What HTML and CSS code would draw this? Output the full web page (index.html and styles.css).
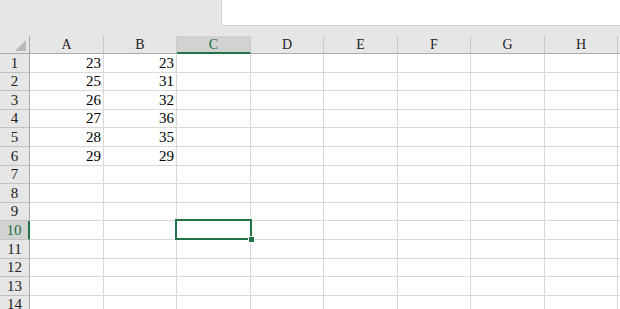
FILE: index.html
```html
<!DOCTYPE html>
<html>
<head>
<meta charset="utf-8">
<link rel="stylesheet" href="styles.css">
</head>
<body>
<div class="app">
  <div class="topbar">
    <div class="topbar-left"></div>
    <div class="formula-box"></div>
  </div>
  <div class="sheet">
    <div class="grid">
      <div class="corner"><span class="tri"></span></div>
      <div class="ch">A</div><div class="ch">B</div><div class="ch sel">C</div><div class="ch">D</div><div class="ch">E</div><div class="ch">F</div><div class="ch">G</div><div class="ch">H</div><div class="ch last"></div>

      <div class="rh">1</div><div class="c n">23</div><div class="c n">23</div><div class="c"></div><div class="c"></div><div class="c"></div><div class="c"></div><div class="c"></div><div class="c"></div><div class="c"></div>
      <div class="rh">2</div><div class="c n">25</div><div class="c n">31</div><div class="c"></div><div class="c"></div><div class="c"></div><div class="c"></div><div class="c"></div><div class="c"></div><div class="c"></div>
      <div class="rh">3</div><div class="c n">26</div><div class="c n">32</div><div class="c"></div><div class="c"></div><div class="c"></div><div class="c"></div><div class="c"></div><div class="c"></div><div class="c"></div>
      <div class="rh">4</div><div class="c n">27</div><div class="c n">36</div><div class="c"></div><div class="c"></div><div class="c"></div><div class="c"></div><div class="c"></div><div class="c"></div><div class="c"></div>
      <div class="rh">5</div><div class="c n">28</div><div class="c n">35</div><div class="c"></div><div class="c"></div><div class="c"></div><div class="c"></div><div class="c"></div><div class="c"></div><div class="c"></div>
      <div class="rh">6</div><div class="c n">29</div><div class="c n">29</div><div class="c"></div><div class="c"></div><div class="c"></div><div class="c"></div><div class="c"></div><div class="c"></div><div class="c"></div>
      <div class="rh">7</div><div class="c"></div><div class="c"></div><div class="c"></div><div class="c"></div><div class="c"></div><div class="c"></div><div class="c"></div><div class="c"></div><div class="c"></div>
      <div class="rh">8</div><div class="c"></div><div class="c"></div><div class="c"></div><div class="c"></div><div class="c"></div><div class="c"></div><div class="c"></div><div class="c"></div><div class="c"></div>
      <div class="rh">9</div><div class="c"></div><div class="c"></div><div class="c"></div><div class="c"></div><div class="c"></div><div class="c"></div><div class="c"></div><div class="c"></div><div class="c"></div>
      <div class="rh sel">10</div><div class="c"></div><div class="c"></div><div class="c"></div><div class="c"></div><div class="c"></div><div class="c"></div><div class="c"></div><div class="c"></div><div class="c"></div>
      <div class="rh">11</div><div class="c"></div><div class="c"></div><div class="c"></div><div class="c"></div><div class="c"></div><div class="c"></div><div class="c"></div><div class="c"></div><div class="c"></div>
      <div class="rh">12</div><div class="c"></div><div class="c"></div><div class="c"></div><div class="c"></div><div class="c"></div><div class="c"></div><div class="c"></div><div class="c"></div><div class="c"></div>
      <div class="rh">13</div><div class="c"></div><div class="c"></div><div class="c"></div><div class="c"></div><div class="c"></div><div class="c"></div><div class="c"></div><div class="c"></div><div class="c"></div>
      <div class="rh">14</div><div class="c"></div><div class="c"></div><div class="c"></div><div class="c"></div><div class="c"></div><div class="c"></div><div class="c"></div><div class="c"></div><div class="c"></div>
    </div>
    <div class="selection"><span class="handle"></span></div>
  </div>
</div>
</body>
</html>
```

FILE: styles.css
```css
html, body {
  margin: 0;
  padding: 0;
  background: #ffffff;
  overflow: hidden;
}
.app {
  width: 620px;
  height: 309px;
  overflow: hidden;
  font-family: "Liberation Serif", "Noto Sans CJK SC", serif;
  color: #000;
}
.topbar {
  height: 36px;
  background: #e6e6e6;
  display: flex;
  align-items: flex-start;
}
.topbar-left {
  width: 221px;
}
.formula-box {
  flex: 1;
  height: 25px;
  background: #ffffff;
  border-left: 1px solid #d2d2d2;
  border-bottom: 1px solid #d2d2d2;
}
.sheet {
  position: relative;
}
.grid {
  display: grid;
  grid-template-columns: 30px 74px 73px 74px 73px 74px 73px 74px 73px 40px;
  grid-template-rows: 18px repeat(14, 18.6px);
}
.corner {
  background: #e6e6e6;
  border-right: 1px solid #ababab;
  border-bottom: 1px solid #ababab;
  position: relative;
}
.tri {
  position: absolute;
  right: 3px;
  bottom: 2px;
  width: 0;
  height: 0;
  border-left: 11px solid transparent;
  border-bottom: 11px solid #b9b9b9;
}
.ch {
  background: #e6e6e6;
  border-bottom: 1px solid #ababab;
  border-right: 1px solid #c9c9c9;
  display: flex;
  align-items: flex-end;
  justify-content: center;
  font-size: 14px;
  line-height: 14px;
  padding-bottom: 1px;
  color: #222;
}
.ch.sel {
  background: #d2d2d2;
  color: #217346;
  border-bottom: 2px solid #217346;
  padding-bottom: 0;
}
.rh {
  background: #e6e6e6;
  border-right: 1px solid #ababab;
  border-bottom: 1px solid #c2c2c2;
  display: flex;
  align-items: flex-end;
  justify-content: center;
  font-size: 15px;
  line-height: 15px;
  padding-bottom: 1px;
  color: #222;
}
.rh.sel {
  background: #d2d2d2;
  color: #217346;
  border-right: 2px solid #217346;
}
.c {
  border-right: 1px solid #d9d9d9;
  border-bottom: 1px solid #d9d9d9;
  background: #fff;
}
.c.n {
  display: flex;
  align-items: flex-end;
  justify-content: flex-end;
  font-size: 15px;
  line-height: 15px;
  padding-right: 2px;
  padding-bottom: 1px;
}
.selection {
  position: absolute;
  left: 175px;
  top: 183px;
  width: 73px;
  height: 17px;
  border: 2px solid #217346;
}
.handle {
  position: absolute;
  right: -5px;
  bottom: -5px;
  width: 5px;
  height: 5px;
  background: #217346;
  border: 1px solid #fff;
}
```
